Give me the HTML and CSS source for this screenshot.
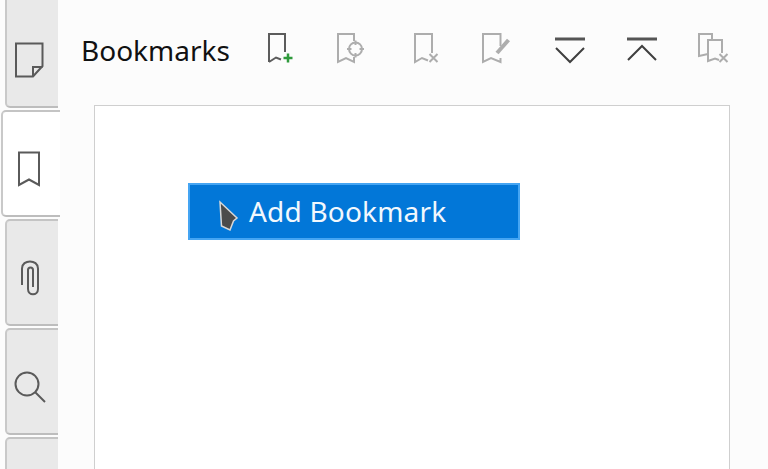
FILE: index.html
```html
<!DOCTYPE html>
<html lang="en">
<head>
<meta charset="utf-8">
<title>Bookmarks</title>
<link rel="stylesheet" href="styles.css">
</head>
<body>
<div class="app">
  <nav class="tabs">
    <div class="tab tab-first">
      <svg width="30" height="36" viewBox="0 0 30 36" class="ico-dark"><path d="M2 1.500H28.500V24L19 34.500H2Z"/><path d="M19 34.500V25H28.500"/></svg>
    </div>
    <div class="tab tab-active">
      <svg width="24" height="36" viewBox="0 0 24 36" class="ico-dark"><path d="M2 1.500H22V34L12 28.500L2 34Z"/></svg>
    </div>
    <div class="tab">
      <svg width="20" height="38" viewBox="0 0 20 38" class="ico-dark"><path d="M2 26V9.500C2 0 18 0 18 9.500V30C18 37 8 37 8 30V11C8 7.500 13 7.500 13 11V28"/></svg>
    </div>
    <div class="tab">
      <svg width="32" height="32" viewBox="0 0 32 32" class="ico-thin"><circle cx="13" cy="13" r="11.500"/><path d="M21 21L31 31"/></svg>
    </div>
    <div class="tab"></div>
  </nav>
  <main class="main">
    <header class="toolbar">
      <h1 class="title">Bookmarks</h1>
      <div class="tools">
        <svg viewBox="0 0 36 32" class="tool tool-on"><path d="M5 30V2H21V20"/><path d="M5 30L12 25.500L17 27.500"/><path class="plus" d="M19.500 26H28.500M24 21.500V30.500"/></svg>
        <svg viewBox="0 0 36 32" class="tool tool-off"><path d="M18 9V2H2V30L10 26L18 30V25"/><circle cx="19.500" cy="17" r="6.500"/><path d="M19.500 8.500V13M19.500 21V25.500M11 17H15.500M23.500 17H28"/></svg>
        <svg viewBox="0 0 36 32" class="tool tool-off"><path d="M24 21V2H7V30L14 26L20 28.500"/><path d="M21.500 22L29.500 30M29.500 22L21.500 30"/></svg>
        <svg viewBox="0 0 36 32" class="tool tool-off"><path d="M20.500 14V2H3V30L11 26L20.500 30V26"/><path class="pen" d="M17 21L28.500 8"/></svg>
        <svg viewBox="0 0 36 32" class="tool tool-chev"><path class="bar" d="M3 7H33"/><path d="M4 16L18 30L32 16"/></svg>
        <svg viewBox="0 0 36 32" class="tool tool-chev"><path class="bar" d="M3 7H33"/><path d="M4 28L18 14L32 28"/></svg>
        <svg viewBox="0 0 36 32" class="tool tool-off"><path d="M16 8V2H3V24L12 22"/><path d="M26 21V8H12V29L19 26.500L23 28"/><path d="M23.500 22L31.500 30M31.500 22L23.500 30"/></svg>
      </div>
    </header>
    <section class="panel">
      <div class="menu-item">
        <svg width="22" height="32" viewBox="0 0 22 32" class="cursor"><path d="M2 2L19 18L15.500 21L12 30L3.500 26Z"/></svg>
        <span>Add Bookmark</span>
      </div>
    </section>
  </main>
</div>
</body>
</html>
```
FILE: styles.css
```css
html, body {
  margin: 0;
  height: 100%;
  overflow: hidden;
  background: #fcfcfc;
}
.app {
  display: flex;
  height: 469px;
  overflow: hidden;
  font-family: "Noto Sans", sans-serif;
}
.tabs {
  width: 60px;
  flex: none;
  display: flex;
  flex-direction: column;
  gap: 2px;
}
.tab {
  flex: none;
  box-sizing: border-box;
  height: 107px;
  margin-left: 5px;
  width: 53px;
  padding: 10px 6px 0 0;
  background: #e9e9e9;
  border: 2px solid #c9c9c9;
  border-right: 0;
  border-top-color: #c4c4c4;
  border-bottom-color: #bdbdbd;
  border-radius: 5px 0 0 5px;
  display: flex;
  align-items: center;
  justify-content: center;
}
.tab-first {
  height: 113px;
  margin-top: -5px;
  padding-top: 16px;
  padding-right: 8px;
}
.tab-active {
  margin-left: 1px;
  width: 59px;
  background: #fff;
  padding-right: 5px;
}
.ico-dark, .ico-thin {
  fill: none;
  stroke: #5a5a5a;
  stroke-width: 2;
}
.main {
  flex: 1;
  min-width: 0;
}
.toolbar {
  height: 105px;
  box-sizing: border-box;
  display: flex;
  align-items: flex-start;
  justify-content: space-between;
  padding: 32px 18px 0 22px;
}
.title {
  margin: 0 0 0 -1px;
  font-size: 28px;
  line-height: 36px;
  font-weight: 400;
  color: #111;
}
.tools {
  display: grid;
  grid-template-columns: repeat(7, 72px);
  justify-items: center;
}
.tool {
  width: 36px;
  height: 32px;
  fill: none;
  stroke-width: 2;
}
.tool-on { stroke: #5c5c5c; }
.tool-off { stroke: #adadad; }
.tool-chev { stroke: #3f3f3f; }
.bar { stroke-width: 3; stroke: #555; }
.plus { stroke: #2f9a3c; stroke-width: 2.500; }
.pen { stroke-width: 4; }
.panel {
  margin-left: 34px;
  width: 636px;
  height: 400px;
  box-sizing: border-box;
  background: #fff;
  border: 1px solid #cfcfcf;
  padding: 77px 0 0 93px;
}
.menu-item {
  box-sizing: border-box;
  width: 332px;
  height: 57px;
  background: #0277d8;
  border: 2px solid #45a5f3;
  display: flex;
  align-items: center;
  padding-left: 28px;
  color: #f2f8fd;
  font-size: 28px;
}
.menu-item span {
  margin: 0 0 2px 9px;
  letter-spacing: 0.2px;
}
.cursor {
  flex: none;
  fill: #4b4b4b;
  stroke: #d8d8d8;
  stroke-width: 1.500;
  margin-top: 9px;
}
```
